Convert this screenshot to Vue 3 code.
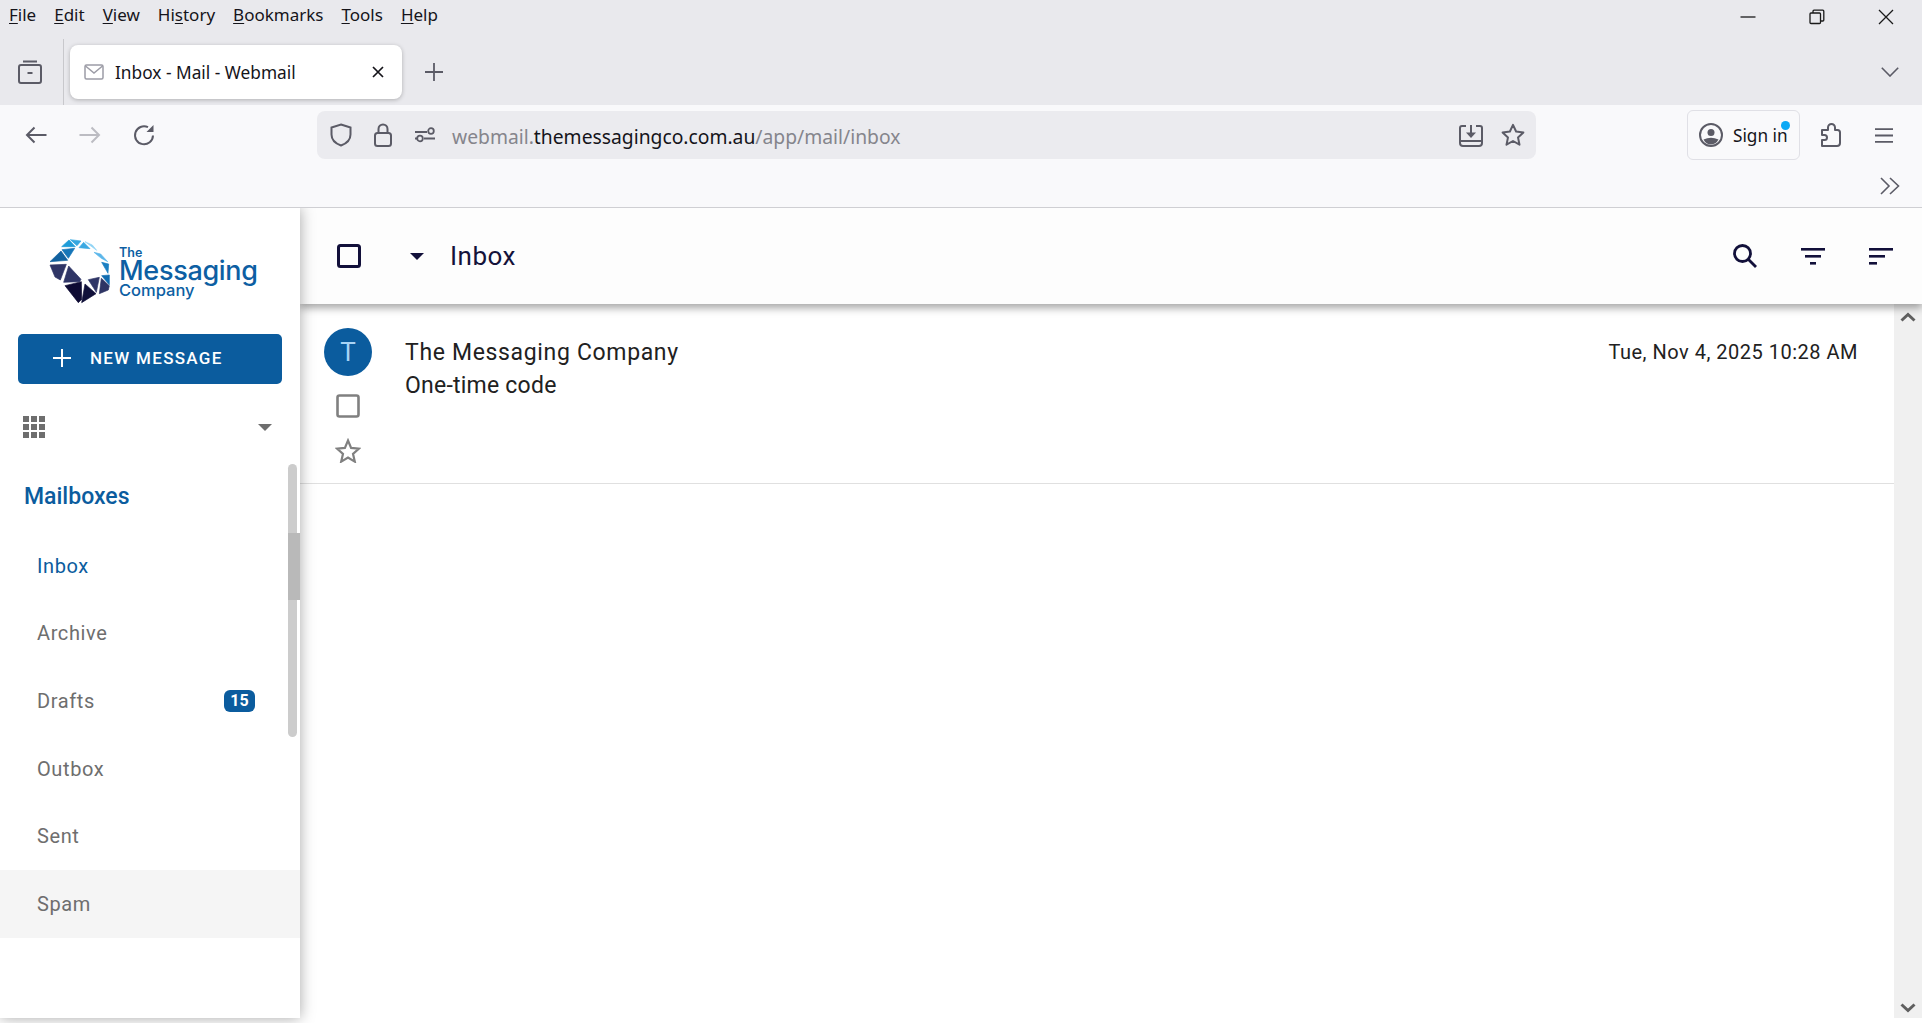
<script setup>
const menu = [
  ["", "F", "ile"],
  ["", "E", "dit"],
  ["", "V", "iew"],
  ["Hi", "s", "tory"],
  ["", "B", "ookmarks"],
  ["", "T", "ools"],
  ["", "H", "elp"],
];

const folders = [
  { name: "Inbox", active: true },
  { name: "Archive" },
  { name: "Drafts", badge: 15 },
  { name: "Outbox" },
  { name: "Sent" },
  { name: "Spam", hover: true },
];

const logoPieces = [
  ["186,124 208,104 227,124", "#1e9cd8"],
  ["212,103 244,107 232,121", "#35a7e0"],
  ["238,127 252,111 271,130", "#3ba9e2"],
  ["256,109 278,119 291,135", "#8fd3f5"],
  ["283,141 303,146 324,169 305,159", "#5bb6ea"],
  ["187,133 225,129 206,159", "#1676b8"],
  ["151,169 184,137 204,165", "#11619f"],
  ["151,179 200,177 182,224 166,215", "#2f3566"],
  ["207,182 244,222 240,229 192,231", "#2f3566"],
  ["196,241 245,229 246,282 236,292", "#0e0b33"],
  ["256,236 289,265 246,292", "#10103a"],
  ["266,223 299,216 290,261", "#2f3566"],
  ["305,219 329,241 326,254 299,265", "#2e3564"],
  ["306,171 327,176 325,204", "#1a7fc2"],
  ["306,211 329,209 329,238", "#0f6cb0"],
];
</script>

<template>
  <div class="page">
    <header class="chrome">
      <div class="menubar">
        <span v-for="m in menu" :key="m[1]" class="menu-item">{{ m[0] }}<u>{{ m[1] }}</u>{{ m[2] }}</span>
        <div class="winbtns">
          <svg width="16" height="16" viewBox="0 0 16 16"><path d="M0.5 8h15" stroke="#1a1a1a" stroke-width="1.3" /></svg>
          <svg width="16" height="16" viewBox="0 0 16 16" fill="none" stroke="#1a1a1a" stroke-width="1.3"><rect x="1" y="4" width="10.5" height="10.5" rx="1" /><path d="M4 4V2.2q0-1 1-1h8.8q1 0 1 1V11q0 1-1 1h-2.3" /></svg>
          <svg width="16" height="16" viewBox="0 0 16 16"><path d="M1 1l14 14M15 1L1 15" stroke="#1a1a1a" stroke-width="1.3" /></svg>
        </div>
      </div>

      <div class="tabbar">
        <svg class="tabs-btn" width="24" height="24" viewBox="0 0 24 24" fill="none" stroke="#5b5b66" stroke-width="2"><path d="M5 1.500h14M1 7q0-2 2-2h18q2 0 2 2v14q0 2-2 2H3q-2 0-2-2z" /><path d="M9.500 13h5" /></svg>
        <div class="tab-sep"></div>
        <div class="tab">
          <svg width="20" height="16" viewBox="0 0 20 16" fill="none" stroke="#9c9ca6" stroke-width="1.5"><rect x="1" y="1" width="18" height="14" rx="1.5" /><path d="M1.5 2l8.5 7 8.5-7" /></svg>
          <span class="tab-title">Inbox - Mail - Webmail</span>
          <svg class="tab-close" width="12" height="12" viewBox="0 0 12 12"><path d="M1 1l10 10M11 1L1 11" stroke="#15141a" stroke-width="1.7" /></svg>
        </div>
        <svg class="tab-plus" width="18" height="18" viewBox="0 0 18 18"><path d="M9 0v18M0 9h18" stroke="#5b5b66" stroke-width="1.8" /></svg>
        <svg class="tab-more" width="18" height="10" viewBox="0 0 18 10" fill="none"><path d="M0.8 0.8L9 9l8.200-8.200" stroke="#5b5b66" stroke-width="1.6" /></svg>
      </div>

      <div class="toolbar">
        <div class="navrow">
          <div class="nav-icons">
            <svg width="22" height="18" viewBox="0 0 22 18" fill="none" stroke="#5b5b66" stroke-width="2"><path d="M21.500 9H2M9.500 1.500L2 9l7.500 7.500" /></svg>
            <svg width="22" height="18" viewBox="0 0 22 18" fill="none" stroke="#bcbcc2" stroke-width="2"><path d="M0.500 9H20M12.500 1.500L20 9l-7.500 7.500" /></svg>
            <svg width="22" height="22" viewBox="0 0 22 22" fill="none" stroke="#5b5b66" stroke-width="2"><path d="M20 11.500A9 9 0 1 1 15 3.200" /><path d="M20.500 1v7h-7z" fill="#5b5b66" stroke="none" /></svg>
          </div>
          <div class="urlbar">
            <svg width="22" height="24" viewBox="0 0 22 24" fill="none" stroke="#5b5b66" stroke-width="2"><path d="M11 1.500l9.500 3v7c0 5-4 9-9.500 11C5.500 20.500 1.500 16.500 1.500 11.500v-7z" /></svg>
            <svg class="u-lock" width="18" height="24" viewBox="0 0 18 24" fill="none" stroke="#5b5b66" stroke-width="2"><rect x="1" y="10" width="16" height="13" rx="2.500" /><path d="M4.500 10V6a4.500 4.500 0 0 1 9 0v4" /></svg>
            <svg class="u-tune" width="22" height="16" viewBox="0 0 22 16" fill="none" stroke="#5b5b66" stroke-width="1.800"><path d="M1 5h12M1 11.500h2M10 11.500h11" /><circle cx="17" cy="4" r="2.800" /><circle cx="6" cy="11.500" r="2.800" /></svg>
            <div class="url"><span class="dim">webmail.</span>themessagingco.com.au<span class="dim">/app/mail/inbox</span></div>
            <svg width="24" height="23" viewBox="0 0 24 23" fill="none" stroke="#5b5b66" stroke-width="2"><path d="M7 2H3Q1 2 1 4v15q0 3 3 3h16q3 0 3-3V4q0-2-2-2h-4M1 17h22" /><path d="M12 1v10" /><path d="M7 8.500h10L12 14z" fill="#5b5b66" stroke="none" /></svg>
            <svg class="u-star" width="24" height="24" viewBox="0 0 24 24" fill="none" stroke="#5b5b66" stroke-width="2" stroke-linejoin="round"><path d="M12 1.800l3.100 6.700 7.300.9-5.400 5 1.500 7.300-6.500-3.700-6.500 3.700L7 14.400l-5.400-5 7.300-.9z" /></svg>
          </div>
          <div class="signin">
            <svg width="24" height="24" viewBox="0 0 24 24"><circle cx="12" cy="12" r="11" fill="none" stroke="#5b5b66" stroke-width="2" /><circle cx="12" cy="9.500" r="3.500" fill="#5b5b66" /><path d="M4.500 16.500q7.500-3.500 15 0-2.500 4.800-7.500 5-5 0-7.500-5z" fill="#5b5b66" /></svg>
            <span>Sign in</span>
            <i class="dot"></i>
          </div>
          <svg class="puzzle" width="21" height="24" viewBox="0 0 21 24" fill="none" stroke="#5b5b66" stroke-width="2" stroke-linejoin="round"><path d="M8 7V4.500a3.500 3.500 0 0 1 7 0V7h2.500q2.500 0 2.500 2.500V20q0 3-3 3H2v-6h2.500a2.500 2.500 0 0 0 0-5H2V7z" /></svg>
          <svg class="burger" width="18" height="15" viewBox="0 0 18 15" stroke="#5b5b66" stroke-width="1.800"><path d="M0 1.200h18M0 7.500h18M0 13.800h18" /></svg>
        </div>
        <div class="bookmarks">
          <svg width="20" height="18" viewBox="0 0 20 18" fill="none" stroke="#5b5b66" stroke-width="1.600"><path d="M1 1l8 8-8 8M10 1l8.500 8-8.500 8" /></svg>
        </div>
      </div>
    </header>

    <div class="app">
      <aside class="sidebar">
        <div class="logo">
          <svg class="logo-mark" width="62" height="66.670" viewBox="148 98 186 200">
            <polygon
              v-for="(p, i) in logoPieces"
              :key="i"
              :points="p[0]"
              :fill="p[1]"
              :stroke="p[1]"
              stroke-width="2"
              stroke-linejoin="round"
            />
          </svg>
          <div class="logo-text">
            <span class="l-the">The</span>
            <span class="l-main">Messaging</span>
            <span class="l-sub">Company</span>
          </div>
        </div>

        <button class="new-msg">
          <svg width="18" height="18" viewBox="0 0 18 18"><path d="M9 0v18M0 9h18" stroke="#fff" stroke-width="2" /></svg>
          <span>NEW MESSAGE</span>
        </button>

        <div class="apps-row">
          <svg width="22" height="22" viewBox="0 0 22 22" fill="#6e6e6e">
            <rect v-for="n in 9" :key="n" :x="(n - 1) % 3 * 8" :y="Math.floor((n - 1) / 3) * 8" width="6" height="6" />
          </svg>
          <svg width="14" height="7" viewBox="0 0 14 7"><path d="M0 0h14L7 7z" fill="#6e6e6e" /></svg>
        </div>

        <div class="mailboxes-title">Mailboxes</div>
        <ul class="folders">
          <li
            v-for="f in folders"
            :key="f.name"
            class="folder"
            :class="{ active: f.active, hover: f.hover }"
          >
            <span>{{ f.name }}</span>
            <span v-if="f.badge" class="badge">{{ f.badge }}</span>
          </li>
        </ul>

        <div class="side-scroll"><div class="side-thumb"></div></div>
      </aside>

      <main class="main">
        <div class="main-head">
          <svg width="24" height="24" viewBox="0 0 24 24" fill="none"><rect x="1.500" y="1.500" width="21" height="21" rx="2" stroke="#12103a" stroke-width="3" /></svg>
          <svg class="head-caret" width="14" height="7" viewBox="0 0 14 7"><path d="M0 0h14L7 7z" fill="#12103a" /></svg>
          <h1>Inbox</h1>
          <svg class="h-search" width="24" height="24" viewBox="0 0 24 24" fill="none" stroke="#12103a" stroke-width="2.800"><circle cx="9.500" cy="9.500" r="8" /><path d="M15.500 15.500L23 23" /></svg>
          <svg class="h-filter" width="24" height="17" viewBox="0 0 24 17" fill="#12103a"><rect width="24" height="2.600" /><rect x="4" y="7" width="16" height="2.600" /><rect x="9" y="14" width="6" height="2.600" /></svg>
          <svg class="h-sort" width="24" height="17" viewBox="0 0 24 17" fill="#12103a"><rect width="24" height="2.600" /><rect y="7" width="16" height="2.600" /><rect y="14" width="8" height="2.600" /></svg>
        </div>

        <div class="main-body">
          <div class="list">
            <div class="msg">
              <div class="msg-side">
                <div class="avatar">T</div>
                <svg width="24" height="24" viewBox="0 0 24 24" fill="none"><rect x="1.500" y="1.500" width="21" height="21" rx="2" stroke="#808080" stroke-width="2.600" /></svg>
                <svg class="msg-star" width="26" height="25" viewBox="0 0 26 25" fill="none" stroke="#808080" stroke-width="2.200"><path d="M13 2.500l3.100 7.400 7.900.7-6 5.200 1.800 7.800-6.800-4.100-6.800 4.100L8 15.800l-6-5.200 7.900-.7z" /></svg>
              </div>
              <div class="msg-text">
                <div class="msg-top">
                  <span class="msg-from">The Messaging Company</span>
                  <span class="msg-date">Tue, Nov 4, 2025 10:28 AM</span>
                </div>
                <div class="msg-subject">One-time code</div>
              </div>
            </div>
          </div>
          <div class="main-scroll">
            <svg width="16" height="10" viewBox="0 0 16 10"><path d="M1.500 8.500L8 2.500l6.500 6" fill="none" stroke="#5f5f5f" stroke-width="3" /></svg>
            <svg width="16" height="10" viewBox="0 0 16 10"><path d="M1.500 1.500L8 7.500l6.500-6" fill="none" stroke="#5f5f5f" stroke-width="3" /></svg>
          </div>
        </div>
      </main>
    </div>
  </div>
</template>

<style scoped>
.page {
  width: 1922px;
  height: 1023px;
  overflow: hidden;
  background: #fff;
  font-family: Roboto, sans-serif;
}

.chrome {
  position: relative;
  z-index: 3;
  font-family: "Noto Sans", sans-serif;
  color: #15141a;
}

.menubar {
  height: 34px;
  display: flex;
  align-items: center;
  gap: 18px;
  padding-left: 9px;
  background: #e9e9ed;
  font-size: 17px;
}

.menu-item {
  margin-bottom: 5px;
}

.menu-item u {
  text-underline-offset: 2px;
}

.winbtns {
  margin-left: auto;
  display: flex;
  gap: 53px;
  padding-right: 28px;
}

.tabbar {
  height: 71px;
  display: flex;
  align-items: center;
  background: #e9e9ed;
}

.tabs-btn {
  margin: 4px 0 0 18px;
}

.tab-sep {
  width: 1px;
  height: 66px;
  margin: 0 6px 0 21px;
  align-self: flex-end;
  background: #c8c8cc;
}

.tab {
  width: 332px;
  height: 54px;
  margin-top: 5px;
  display: flex;
  align-items: center;
  padding: 0 18px 0 14px;
  box-sizing: border-box;
  background: #fff;
  border-radius: 8px;
  box-shadow: 0 1px 4px rgba(0, 0, 0, 0.25);
}

.tab-title {
  margin-left: 11px;
  font-size: 17.3px;
}

.tab-close {
  margin-left: auto;
}

.tab-plus {
  margin: 5px 0 0 23px;
}

.tab-more {
  margin: 4px 23px 0 auto;
}

.toolbar {
  height: 102px;
  border-bottom: 1px solid #cfcfd3;
  background: #f9f9fb;
}

.navrow {
  height: 60px;
  display: flex;
  align-items: center;
}

.nav-icons {
  width: 317px;
  display: flex;
  align-items: center;
  gap: 32px;
  padding-left: 25px;
  box-sizing: border-box;
}

.urlbar {
  width: 1219px;
  height: 48px;
  display: flex;
  align-items: center;
  padding: 0 11px 0 13px;
  box-sizing: border-box;
  background: #ebebef;
  border-radius: 8px;
}

.u-lock {
  margin-left: 22px;
}

.u-tune {
  margin-left: 22px;
}

.url {
  flex: 1;
  margin: 2px 0 0 16px;
  font-size: 19.3px;
  white-space: nowrap;
}

.dim {
  color: #85858c;
}

.u-star {
  margin-left: 18px;
}

.signin {
  position: relative;
  width: 113px;
  height: 50px;
  margin-left: 151px;
  display: flex;
  align-items: center;
  gap: 10px;
  padding-left: 11px;
  box-sizing: border-box;
  border: 1px solid #e0e0e6;
  border-radius: 6px;
  font-size: 17.2px;
}

.dot {
  position: absolute;
  right: 9px;
  top: 10px;
  width: 9px;
  height: 9px;
  border-radius: 50%;
  background: #0aa8f5;
}

.puzzle {
  margin-left: 20px;
}

.burger {
  margin-left: 34px;
}

.bookmarks {
  height: 42px;
  display: flex;
  align-items: center;
  justify-content: flex-end;
  padding-right: 22px;
}

.app {
  height: 810px;
  display: flex;
}

.sidebar {
  position: relative;
  z-index: 2;
  width: 300px;
  flex-shrink: 0;
  background: #fff;
  box-shadow: 0 0 14px rgba(0, 0, 0, 0.35);
}

.logo {
  height: 126px;
  display: flex;
  align-items: center;
  padding-left: 49px;
  box-sizing: border-box;
}

.logo-text {
  display: flex;
  flex-direction: column;
  margin: 3px 0 0 8px;
  color: #0d5fa3;
  font-family: Inter, sans-serif;
}

.l-the {
  font-size: 12.5px;
  font-weight: 600;
  line-height: 13px;
}

.l-main {
  font-size: 27px;
  font-weight: 500;
  line-height: 23px;
  letter-spacing: -0.3px;
}

.l-sub {
  font-size: 16.500px;
  font-weight: 500;
  line-height: 17px;
}

.new-msg {
  width: 264px;
  height: 50px;
  margin: 0 18px;
  display: flex;
  align-items: center;
  gap: 19px;
  padding: 0 0 2px 35px;
  border: none;
  border-radius: 5px;
  background: #0b5c9e;
  color: #fff;
  font-family: Roboto, sans-serif;
  font-size: 17px;
  font-weight: 500;
  letter-spacing: 1.300px;
}

.apps-row {
  height: 84px;
  display: flex;
  align-items: center;
  justify-content: space-between;
  padding: 2px 28px 0 23px;
  box-sizing: border-box;
}

.mailboxes-title {
  height: 48px;
  padding: 16px 0 0 24px;
  color: #0b5c9e;
  font-size: 23px;
  font-weight: 500;
  line-height: 26px;
}

.folders {
  margin: 0;
  padding: 0;
  list-style: none;
}

.folder {
  height: 67.6px;
  display: flex;
  align-items: center;
  justify-content: space-between;
  padding: 0 45px 0 37px;
  color: #6e6e6e;
  font-size: 20px;
  letter-spacing: 0.6px;
}

.folder.active {
  color: #0b5c9e;
}

.folder.hover {
  background: #f5f5f5;
}

.badge {
  width: 31px;
  height: 22px;
  border-radius: 6px;
  background: #0b5c9e;
  color: #fff;
  font-size: 16px;
  font-weight: 700;
  letter-spacing: 0;
  line-height: 22px;
  text-align: center;
}

.side-scroll {
  position: absolute;
  top: 256px;
  left: 288px;
  width: 9px;
  height: 273px;
  border-radius: 5px;
  background: #cccccc;
}

.side-thumb {
  width: 12px;
  height: 67px;
  margin-top: 69px;
  background: #b9b9b9;
}

.main {
  flex: 1;
  min-width: 0;
  display: flex;
  flex-direction: column;
}

.main-head {
  position: relative;
  z-index: 1;
  height: 96px;
  flex-shrink: 0;
  display: flex;
  align-items: center;
  padding: 0 29px 0 37px;
  box-sizing: border-box;
  background: #fdfdfd;
  box-shadow: 0 4px 8px rgba(0, 0, 0, 0.35);
  color: #14123a;
}

.head-caret {
  margin-left: 49px;
}

.main-head h1 {
  margin: 0 auto 0 26px;
  font-size: 26px;
  font-weight: 400;
  letter-spacing: 0.5px;
}

.h-filter {
  margin-left: 44px;
}

.h-sort {
  margin-left: 44px;
}

.main-body {
  flex: 1;
  min-height: 0;
  display: flex;
}

.list {
  flex: 1;
  min-width: 0;
}

.msg {
  height: 180px;
  display: flex;
  padding: 24px 36px 0 24px;
  box-sizing: border-box;
  border-bottom: 1px solid #e0e0e0;
  color: #212121;
}

.msg-side {
  width: 48px;
  display: flex;
  flex-direction: column;
  align-items: center;
}

.avatar {
  width: 48px;
  height: 48px;
  margin-bottom: 18px;
  border-radius: 50%;
  background: #0b5c9e;
  color: #a9d4f5;
  font-size: 26px;
  line-height: 48px;
  text-align: center;
}

.msg-star {
  margin-top: 20px;
}

.msg-text {
  flex: 1;
  margin: 7px 0 0 33px;
  font-size: 23px;
}

.msg-top {
  display: flex;
  justify-content: space-between;
  align-items: center;
  height: 34px;
}

.msg-from {
  letter-spacing: 0.66px;
}

.msg-date {
  font-size: 20px;
  letter-spacing: 0.5px;
}

.msg-subject {
  height: 34px;
  letter-spacing: 0.23px;
  line-height: 34px;
}

.main-scroll {
  width: 28px;
  flex-shrink: 0;
  display: flex;
  flex-direction: column;
  justify-content: space-between;
  align-items: center;
  padding: 8px 0 5px;
  box-sizing: border-box;
  background: #f0f0f0;
}
</style>

<style>
html,
body {
  margin: 0;
  background: #fff;
}
</style>
